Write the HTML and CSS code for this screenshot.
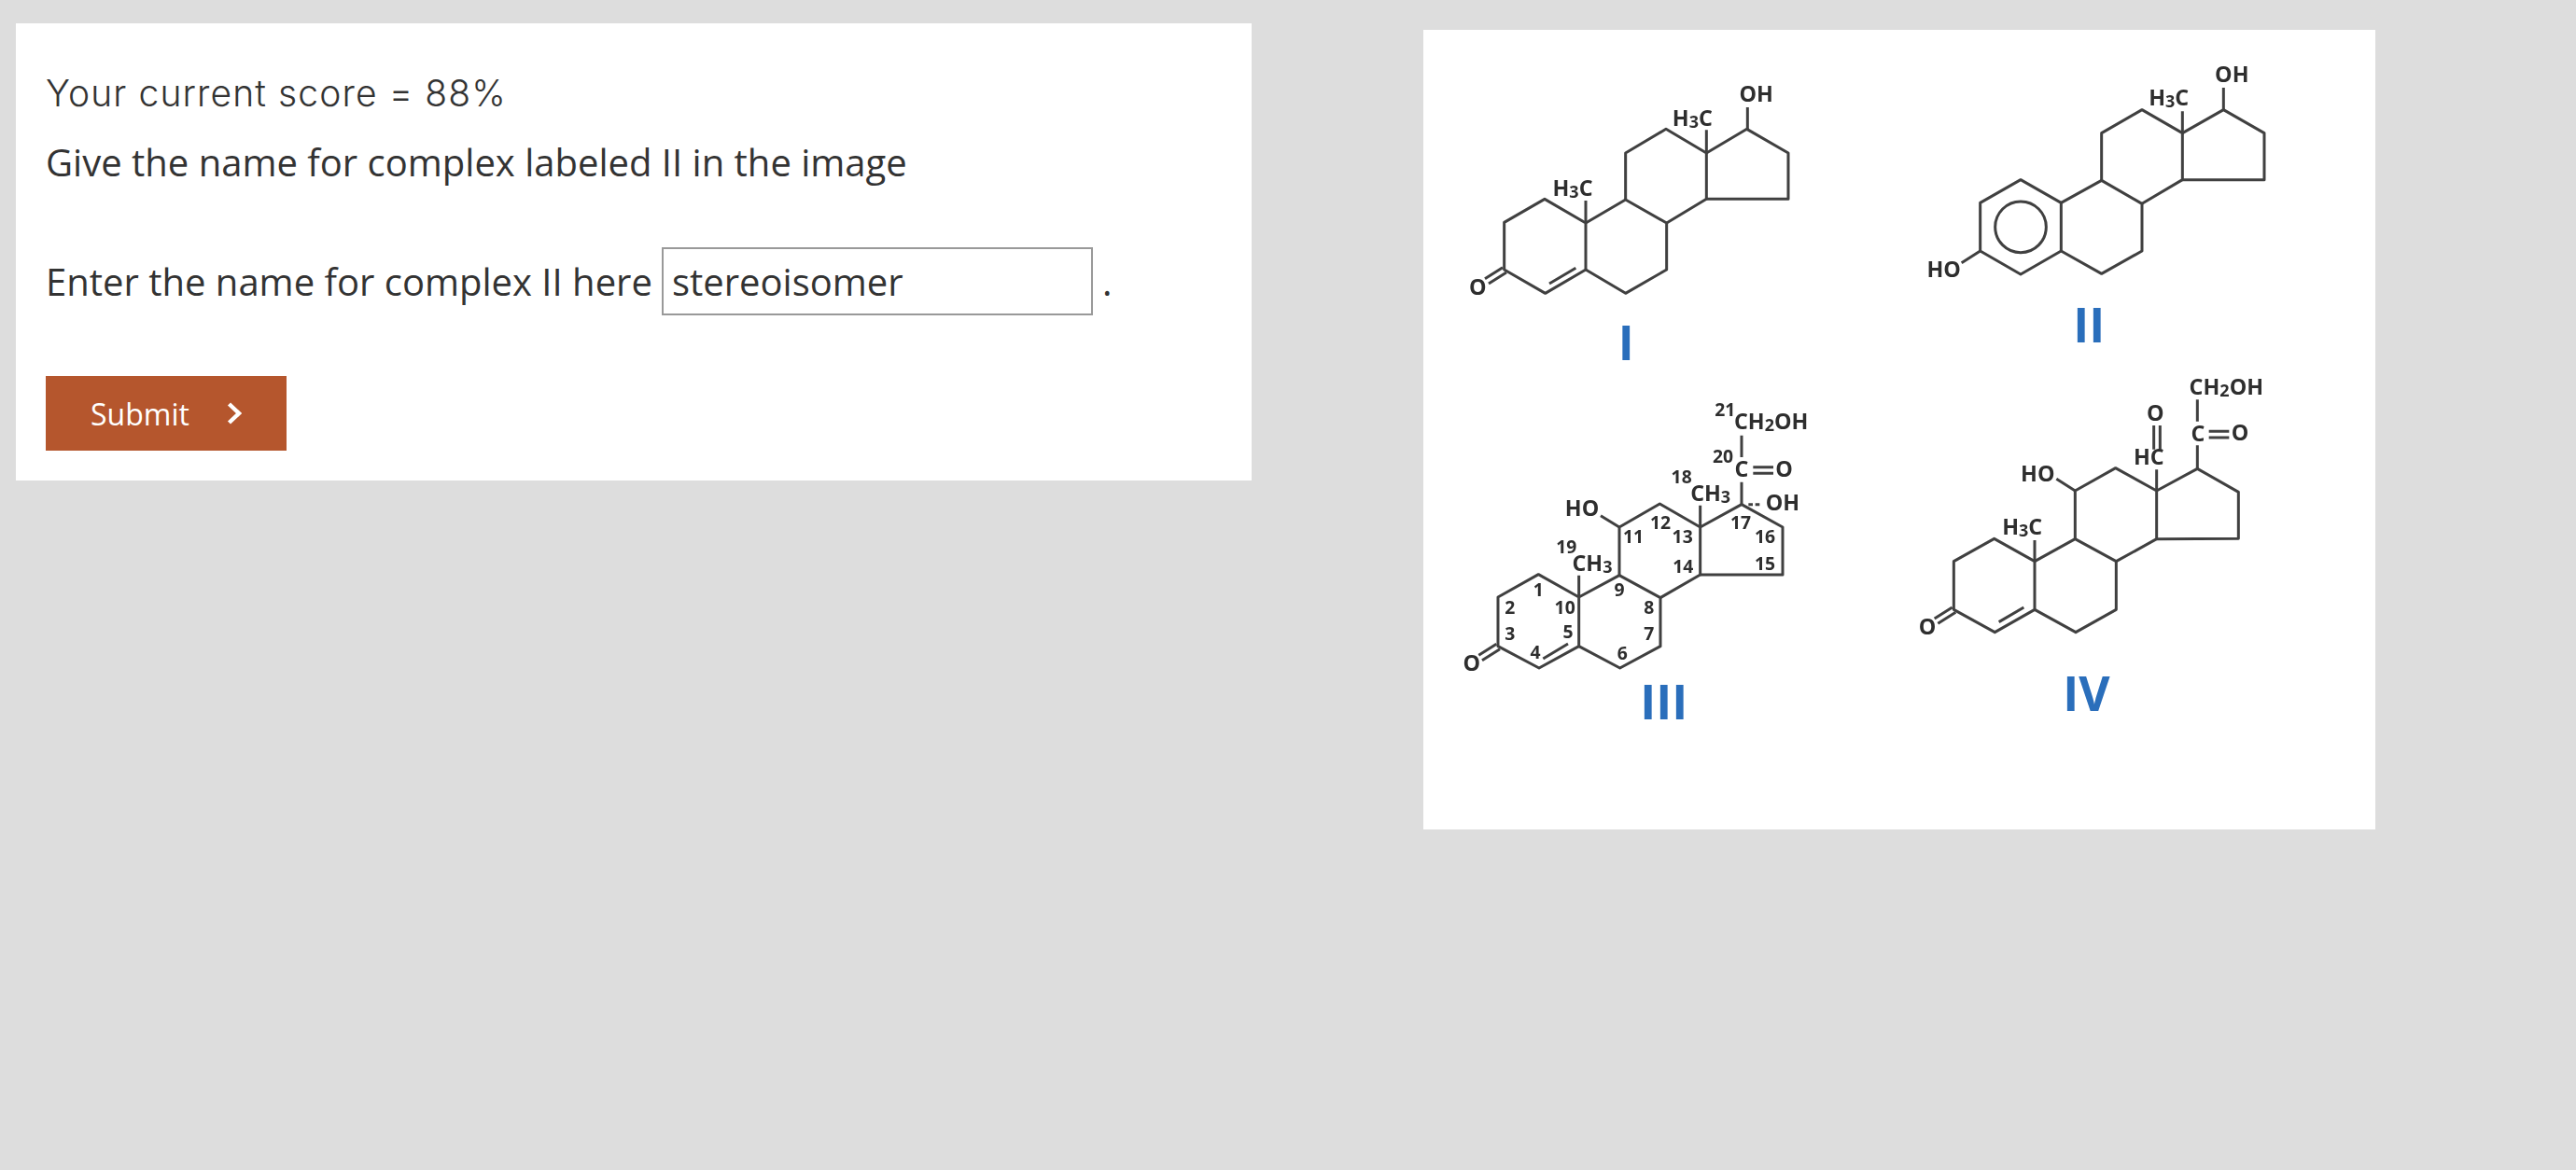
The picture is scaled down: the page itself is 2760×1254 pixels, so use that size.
FILE: index.html
```html
<!DOCTYPE html>
<html lang="en">
<head>
<meta charset="utf-8">
<title>Quiz question</title>
<link rel="stylesheet" href="styles.css">
</head>
<body>
<main class="page">
  <section class="card">
    <p class="score">Your current score = 88%</p>
    <p class="question">Give the name for complex labeled II in the image</p>
    <div class="answer">
      <label class="answer-label" for="name">Enter the name for complex II here</label>
      <input class="answer-input" id="name" type="text" value="stereoisomer">
      <span class="answer-end">.</span>
    </div>
    <button class="submit" type="button">
      <span>Submit</span>
      <svg class="chevron" viewBox="0 0 16 24" aria-hidden="true"><path d="M2.5 2 L13 12 L2.5 22"/></svg>
    </button>
  </section>
  <figure class="figure">
    <svg class="molecules" viewBox="0 0 1020 857" width="1020" height="857" role="img" aria-label="Four steroid structures labeled I to IV">
      <!-- I -->
      <g transform="translate(-5 -12) scale(.33333)">
        <g class="bond">
          <path d="M275 655L405 580L537 657V807L407 883L275 807Z"/>
          <path d="M537 657L665 582L797 657V807L665 883L537 807"/>
          <path d="M665 582V432L795 355L925 432V580L797 657"/>
          <path d="M925 432L1055 355L1188 432V580H925"/>
          <path d="M1057 355V285M925 432V358M537 657V585"/>
          <path d="M420 852L505 802M270 800L213 836M282 816L225 852"/>
        </g>
        <text class="atom" x="1085" y="267">OH</text>
        <text class="atom" x="880" y="344">H<tspan class="sub" dy="6">3</tspan><tspan dy="-6">C</tspan></text>
        <text class="atom" x="495" y="569">H<tspan class="sub" dy="6">3</tspan><tspan dy="-6">C</tspan></text>
        <text class="atom" x="190" y="888">O</text>
        <text class="roman" x="667" y="1097">I</text>
      </g>
      <!-- II -->
      <g transform="translate(515 8) scale(.33333)">
        <g class="bond">
          <path d="M245 532L375 458L505 532V687L375 762L245 687Z"/>
          <circle cx="375" cy="610" r="82"/>
          <path d="M505 532L635 460L765 535V687L635 760L505 687"/>
          <path d="M635 460V308L765 233L895 308V458L765 535"/>
          <path d="M895 308L1027 233L1158 308V458H895"/>
          <path d="M1027 233V162M895 308V238M245 687L185 725"/>
        </g>
        <text class="atom" x="1054" y="144">OH</text>
        <text class="atom" x="851" y="220">H<tspan class="sub" dy="6">3</tspan><tspan dy="-6">C</tspan></text>
        <text class="atom" x="128" y="770">HO</text>
        <text class="roman" x="595" y="982">II</text>
      </g>
      <!-- III -->
      <g transform="translate(15 378) scale(.33333)">
        <g class="bond">
          <path d="M195 690L325 617L455 690V848L327 918L195 848Z"/>
          <path d="M455 690L585 620L717 692V848L587 918L455 848"/>
          <path d="M585 620V465L715 390L845 465V618L717 692"/>
          <path d="M845 465L978 392L1110 465V618H845"/>
          <path d="M340 888L420 840M190 841L133 877M201 857L144 893"/>
          <path d="M585 465L525 428M845 465V395M455 690V620M978 392V320M978 170V240"/>
          <path d="M1015 272H1080M1015 292H1080"/>
          <path class="dash" d="M1000 392H1042"/>
        </g>
        <text class="atom" x="1073" y="151">CH<tspan class="sub" dy="6">2</tspan><tspan dy="-6">OH</tspan></text>
        <text class="atom" x="978" y="302">C</text>
        <text class="atom" x="1115" y="302">O</text>
        <text class="atom" x="878" y="381">CH<tspan class="sub" dy="6">3</tspan></text>
        <text class="atom" x="1110" y="412">OH</text>
        <text class="atom" x="465" y="429">HO</text>
        <text class="atom" x="498" y="606">CH<tspan class="sub" dy="6">3</tspan></text>
        <text class="atom" x="110" y="926">O</text>
        <text class="num" x="925" y="107">21</text>
        <text class="num" x="918" y="257">20</text>
        <text class="num" x="785" y="323">18</text>
        <text class="num" x="415" y="550">19</text>
        <text class="num" x="717" y="471">12</text>
        <text class="num" x="630" y="516">11</text>
        <text class="num" x="788" y="516">13</text>
        <text class="num" x="975" y="470">17</text>
        <text class="num" x="1053" y="516">16</text>
        <text class="num" x="1053" y="603">15</text>
        <text class="num" x="790" y="613">14</text>
        <text class="num" x="585" y="688">9</text>
        <text class="num" x="325" y="686">1</text>
        <text class="num" x="410" y="743">10</text>
        <text class="num" x="680" y="743">8</text>
        <text class="num" x="233" y="743">2</text>
        <text class="num" x="233" y="828">3</text>
        <text class="num" x="420" y="821">5</text>
        <text class="num" x="680" y="828">7</text>
        <text class="num" x="315" y="888">4</text>
        <text class="num" x="595" y="890">6</text>
        <text class="roman" x="728" y="1082">III</text>
      </g>
      <!-- IV -->
      <g transform="translate(505 348) scale(.33333)">
        <g class="bond">
          <path d="M190 665L320 592L450 665V820L322 893L190 820Z"/>
          <path d="M450 665L580 593L712 665V820L582 893L450 820"/>
          <path d="M580 593V438L710 365L842 438V593L712 665"/>
          <path d="M842 438L973 367L1105 442V592L842 593"/>
          <path d="M335 860L415 813M185 813L128 849M196 829L139 865"/>
          <path d="M580 438L520 400M450 665V597M842 438V370M973 367V292M973 145V215"/>
          <path d="M833 228V305M853 228V305M1010 247H1075M1010 267H1075"/>
        </g>
        <text class="atom" x="1066" y="129">CH<tspan class="sub" dy="6">2</tspan><tspan dy="-6">OH</tspan></text>
        <text class="atom" x="975" y="278">C</text>
        <text class="atom" x="1110" y="277">O</text>
        <text class="atom" x="838" y="212">O</text>
        <text class="atom" x="817" y="355">HC</text>
        <text class="atom" x="460" y="407">HO</text>
        <text class="atom" x="410" y="580">H<tspan class="sub" dy="6">3</tspan><tspan dy="-6">C</tspan></text>
        <text class="atom" x="105" y="899">O</text>
        <text class="roman" x="616" y="1145">IV</text>
      </g>
    </svg>
  </figure>
</main>
</body>
</html>
```
FILE: styles.css
```css
* { box-sizing: border-box; }

html, body {
  margin: 0;
  height: 100%;
}

body {
  background: #dddddd;
  color: #333333;
  font-family: "Open Sans", "Liberation Sans", sans-serif;
}

.page {
  display: flex;
  align-items: flex-start;
  padding-left: 17px;
}

.card {
  width: 1324px;
  height: 490px;
  margin-top: 25px;
  padding: 50px 32px 0;
  background: #ffffff;
}

.score {
  margin: 0;
  font-family: Inter, "Open Sans", sans-serif;
  font-size: 39px;
  font-weight: 300;
  letter-spacing: 1.1px;
  line-height: 50px;
}

.question {
  margin: 24px 0 0;
  font-size: 40px;
  line-height: 50px;
}

.answer {
  display: flex;
  align-items: center;
  gap: 10px;
  height: 73px;
  margin-top: 66px;
  font-size: 40px;
}

.answer-input {
  width: 462px;
  height: 73px;
  padding: 0 9px;
  border: 2px solid #999999;
  border-radius: 0;
  background: #ffffff;
  color: #333333;
  font: inherit;
  outline: none;
}

.submit {
  display: flex;
  align-items: center;
  gap: 40px;
  width: 258px;
  height: 80px;
  margin-top: 65px;
  padding: 0 0 0 48px;
  border: 0;
  background: #b5562d;
  color: #ffffff;
  font-family: inherit;
  font-size: 32px;
}

.chevron {
  width: 16px;
  height: 24px;
  fill: none;
  stroke: #ffffff;
  stroke-width: 4.4;
}

.figure {
  width: 1020px;
  height: 857px;
  margin: 32px 0 0 184px;
  background: #ffffff;
}

.molecules {
  display: block;
  filter: blur(0.6px);
}

.bond path,
.bond circle {
  fill: none;
  stroke: #404040;
  stroke-width: 9;
  stroke-linejoin: round;
}

.bond .dash {
  stroke-dasharray: 14 8;
}

.atom {
  fill: #2e2e2e;
  font-family: "Open Sans", sans-serif;
  font-size: 70px;
  font-weight: 700;
  text-anchor: middle;
}

.sub {
  font-size: 54px;
}

.num {
  fill: #2e2e2e;
  font-family: "Open Sans", sans-serif;
  font-size: 58px;
  font-weight: 700;
  text-anchor: middle;
}

.roman {
  fill: #2a6ebb;
  font-family: "Open Sans", sans-serif;
  font-size: 154px;
  font-weight: 700;
  text-anchor: middle;
}
```
